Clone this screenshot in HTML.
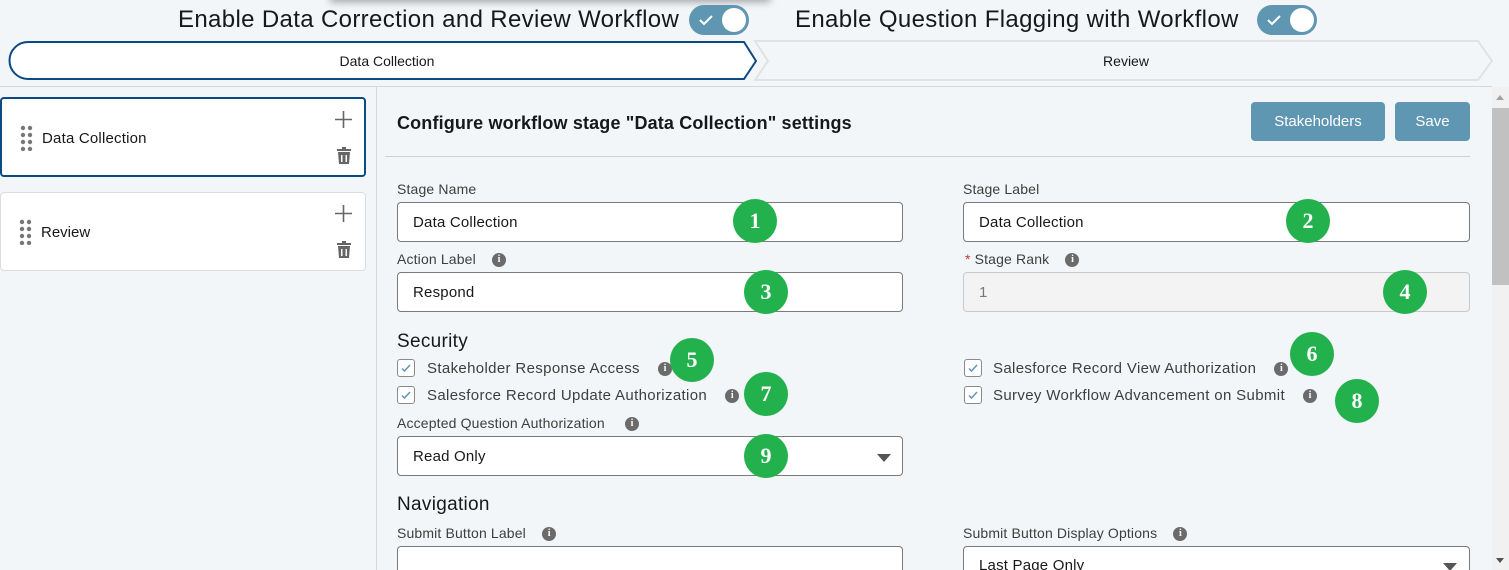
<!DOCTYPE html>
<html><head><style>
*{box-sizing:border-box;margin:0;padding:0}
html,body{width:1509px;height:570px;overflow:hidden}
body{background:#f3f6f9;font-family:"Liberation Sans",sans-serif;color:#181818;position:relative}
.a{position:absolute}
.tg{font-size:24px;color:#181818;white-space:nowrap;letter-spacing:.35px}
.sw{width:60px;height:30px;border-radius:15px;background:#5f97b3}
.sw .k{position:absolute;right:3px;top:3px;width:24px;height:24px;border-radius:50%;background:#fff}
.lbl{font-size:14px;color:#3e3e3c;white-space:nowrap;letter-spacing:.15px}
.inp{background:#fff;border:1px solid #7a7a7a;border-radius:4px;height:40px;font-size:15px;padding:0 15px;line-height:40px;letter-spacing:.2px}
.info{display:inline-block;width:14px;height:14px;border-radius:50%;background:#6b6b6b;color:#fff;font-size:10px;font-weight:bold;text-align:center;line-height:14px;font-family:"Liberation Serif",serif;vertical-align:middle;letter-spacing:0}
.g{width:44px;height:44px;border-radius:50%;background:#22b14c;color:#fff;font-family:"Liberation Serif",serif;font-weight:bold;font-size:22px;text-align:center;line-height:44px}
.cb{width:18px;height:18px;border:1px solid #8a8a8a;border-radius:3px;background:#fff}
.ck{font-size:15px;color:#3e3e3c;white-space:nowrap;letter-spacing:.35px}
.btn{background:#5f97b3;color:#fff;border-radius:4px;font-size:15px;text-align:center;line-height:39px;height:39px}
.card{background:#fff;border-radius:4px}
</style></head><body>
<div class="a" style="left:330px;top:-10px;width:440px;height:10px;box-shadow:0 2px 8px rgba(0,0,0,.35)"></div>
<div class="a tg" style="left:178px;top:6px">Enable Data Correction and Review Workflow</div>
<div class="a sw" style="left:689px;top:5px"><svg class="a" style="left:10px;top:9px" width="14" height="12"><path d="M1 6l4 4 8-8" stroke="#fff" stroke-width="2" fill="none"/></svg><div class="k"></div></div>
<div class="a tg" style="left:795px;top:6px">Enable Question Flagging with Workflow</div>
<div class="a sw" style="left:1257px;top:5px"><svg class="a" style="left:10px;top:9px" width="14" height="12"><path d="M1 6l4 4 8-8" stroke="#fff" stroke-width="2" fill="none"/></svg><div class="k"></div></div>

<svg class="a" style="left:0;top:40px" width="1509" height="42">
<path d="M761 1 L1478 1 L1492 21 L1478 40 L761 40 L755 40 L768 21 L755 1Z" fill="#f3f6f9" stroke="#e2e2e2" stroke-width="2"/>
<path d="M28 2 L744 2 L756 21 L744 39 L28 39 A18.5 18.5 0 0 1 28 2Z" fill="#fff" stroke="#0b4a82" stroke-width="2"/>
<text x="387" y="26" text-anchor="middle" font-size="14" font-family="Liberation Sans" fill="#181818">Data Collection</text>
<text x="1126" y="26" text-anchor="middle" font-size="14" font-family="Liberation Sans" fill="#181818">Review</text>
</svg>
<div class="a" style="left:0;top:86px;width:1492px;height:1px;background:#d8d8d8"></div>
<div class="a" style="left:376px;top:86px;width:1px;height:484px;background:#d8d8d8"></div>

<div class="a card" style="left:0;top:97px;width:366px;height:80px;border:2px solid #0b4a82"></div>
<div class="a card" style="left:0;top:192px;width:366px;height:79px;border:1px solid #dcdcdc"></div>
<svg class="a" style="left:20px;top:125px" width="14" height="26"><g fill="#777"><circle cx="3" cy="3" r="2.2"/><circle cx="10" cy="3" r="2.2"/><circle cx="3" cy="10" r="2.2"/><circle cx="10" cy="10" r="2.2"/><circle cx="3" cy="17" r="2.2"/><circle cx="10" cy="17" r="2.2"/><circle cx="3" cy="24" r="2.2"/><circle cx="10" cy="24" r="2.2"/></g></svg>
<div class="a" style="left:42px;top:130px;font-size:15px;letter-spacing:.2px">Data Collection</div>
<svg class="a" style="left:19px;top:219px" width="14" height="26"><g fill="#777"><circle cx="3" cy="3" r="2.2"/><circle cx="10" cy="3" r="2.2"/><circle cx="3" cy="10" r="2.2"/><circle cx="10" cy="10" r="2.2"/><circle cx="3" cy="17" r="2.2"/><circle cx="10" cy="17" r="2.2"/><circle cx="3" cy="24" r="2.2"/><circle cx="10" cy="24" r="2.2"/></g></svg>
<div class="a" style="left:41px;top:224px;font-size:15px">Review</div>
<svg class="a" style="left:335px;top:111px" width="17" height="17"><path d="M8.5 0v17M0 8.5h17" stroke="#666" stroke-width="1.6"/></svg>
<svg class="a" style="left:335px;top:205px" width="17" height="17"><path d="M8.5 0v17M0 8.5h17" stroke="#666" stroke-width="1.6"/></svg>
<svg class="a" style="left:336px;top:147px" width="16" height="18"><rect x="1" y="2" width="14" height="2" fill="#666"/><rect x="6" y="0" width="4" height="2" fill="#666"/><path d="M2 5h12l-1 12H3z" fill="#666"/><rect x="5" y="8" width="1.5" height="7" fill="#fff"/><rect x="9.5" y="8" width="1.5" height="7" fill="#fff"/></svg>
<svg class="a" style="left:336px;top:241px" width="16" height="18"><rect x="1" y="2" width="14" height="2" fill="#666"/><rect x="6" y="0" width="4" height="2" fill="#666"/><path d="M2 5h12l-1 12H3z" fill="#666"/><rect x="5" y="8" width="1.5" height="7" fill="#fff"/><rect x="9.5" y="8" width="1.5" height="7" fill="#fff"/></svg>

<div class="a" style="left:397px;top:113px;font-size:18px;font-weight:bold;letter-spacing:.15px">Configure workflow stage "Data Collection" settings</div>
<div class="a btn" style="left:1251px;top:102px;width:134px">Stakeholders</div>
<div class="a btn" style="left:1395px;top:102px;width:75px">Save</div>
<div class="a" style="left:385px;top:156px;width:1085px;height:1px;background:#d0d0d0"></div>

<div class="a lbl" style="left:397px;top:181px">Stage Name</div>
<div class="a inp" style="left:397px;top:202px;width:506px">Data Collection</div>
<div class="a lbl" style="left:963px;top:181px">Stage Label</div>
<div class="a inp" style="left:963px;top:202px;width:507px">Data Collection</div>
<div class="a lbl" style="left:397px;top:251px">Action Label &nbsp;&nbsp;&nbsp;<span class="info">i</span></div>
<div class="a inp" style="left:397px;top:272px;width:506px">Respond</div>
<div class="a lbl" style="left:965px;top:251px"><span style="color:#c23934">*</span> Stage Rank &nbsp;&nbsp;&nbsp;<span class="info">i</span></div>
<div class="a inp" style="left:963px;top:272px;width:507px;background:#f3f3f3;border-color:#c9c9c9;color:#777">1</div>

<div class="a" style="left:397px;top:331px;font-size:19px;color:#181818;letter-spacing:.3px">Security</div>
<svg width="0" height="0" style="position:absolute"></svg>
<div class="a cb" style="left:397px;top:359px"><svg width="16" height="16"><path d="M4 8.5l2.5 2.5 5.5-6" stroke="#5f97b3" stroke-width="1.5" fill="none"/></svg></div><div class="a ck" style="left:427px;top:360px">Stakeholder Response Access &nbsp;&nbsp;&nbsp;<span class="info">i</span></div>
<div class="a cb" style="left:397px;top:386px"><svg width="16" height="16"><path d="M4 8.5l2.5 2.5 5.5-6" stroke="#5f97b3" stroke-width="1.5" fill="none"/></svg></div><div class="a ck" style="left:427px;top:387px">Salesforce Record Update Authorization &nbsp;&nbsp;&nbsp;<span class="info">i</span></div>
<div class="a cb" style="left:964px;top:359px"><svg width="16" height="16"><path d="M4 8.5l2.5 2.5 5.5-6" stroke="#5f97b3" stroke-width="1.5" fill="none"/></svg></div><div class="a ck" style="left:993px;top:360px">Salesforce Record View Authorization &nbsp;&nbsp;&nbsp;<span class="info">i</span></div>
<div class="a cb" style="left:964px;top:386px"><svg width="16" height="16"><path d="M4 8.5l2.5 2.5 5.5-6" stroke="#5f97b3" stroke-width="1.5" fill="none"/></svg></div><div class="a ck" style="left:993px;top:387px">Survey Workflow Advancement on Submit &nbsp;&nbsp;&nbsp;<span class="info">i</span></div>
<div class="a lbl" style="left:397px;top:415px">Accepted Question Authorization &nbsp;&nbsp;&nbsp;&nbsp;<span class="info">i</span></div>
<div class="a inp" style="left:397px;top:436px;width:506px">Read Only</div>
<div class="a" style="left:877px;top:454px;border-left:7px solid transparent;border-right:7px solid transparent;border-top:8px solid #555"></div>

<div class="a" style="left:397px;top:494px;font-size:19px;letter-spacing:.3px">Navigation</div>
<div class="a lbl" style="left:397px;top:525px">Submit Button Label &nbsp;&nbsp;&nbsp;<span class="info">i</span></div>
<div class="a inp" style="left:397px;top:546px;width:506px;height:40px"></div>
<div class="a lbl" style="left:963px;top:525px">Submit Button Display Options &nbsp;&nbsp;&nbsp;<span class="info">i</span></div>
<div class="a inp" style="left:963px;top:546px;width:507px;height:40px;line-height:38px">Last Page Only</div>
<div class="a" style="left:1443px;top:563px;border-left:7px solid transparent;border-right:7px solid transparent;border-top:8px solid #555"></div>

<div class="a" style="left:1492px;top:87px;width:17px;height:483px;background:#f1f1f1"></div>
<div class="a" style="left:1492px;top:108px;width:17px;height:177px;background:#c1c1c1"></div>
<div class="a" style="left:1496px;top:95px;border-left:4px solid transparent;border-right:4px solid transparent;border-bottom:5px solid #a3a3a3"></div>
<div class="a" style="left:1496px;top:558px;border-left:4px solid transparent;border-right:4px solid transparent;border-top:5px solid #505050"></div>

<div class="a g" style="left:733px;top:199px">1</div>
<div class="a g" style="left:1286px;top:199px">2</div>
<div class="a g" style="left:744px;top:270px">3</div>
<div class="a g" style="left:1383px;top:270px">4</div>
<div class="a g" style="left:670px;top:338px">5</div>
<div class="a g" style="left:1290px;top:332px">6</div>
<div class="a g" style="left:744px;top:372px">7</div>
<div class="a g" style="left:1335px;top:379px">8</div>
<div class="a g" style="left:744px;top:434px">9</div>
</body></html>
